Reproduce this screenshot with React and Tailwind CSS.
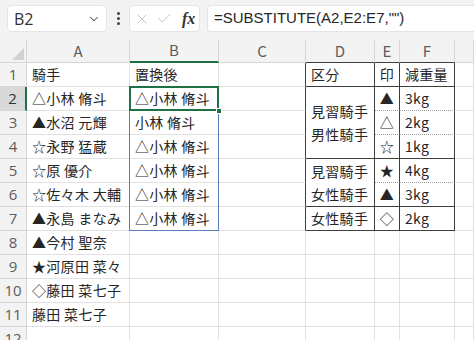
import { ChevronDown, X, Check } from "lucide-react";

const CJK = { fontFamily: '"Noto Sans CJK JP", "Noto Sans", sans-serif' };
const UI = { fontFamily: '"Open Sans", "Liberation Sans", sans-serif' };

const GRID = "border-[#e1e1e1]";

const rows = [
  { a: "騎手", b: "置換後", d: "区分", e: "印", f: "減重量" },
  { a: "△小林 脩斗", b: "△小林 脩斗", d: ["見習騎手", "男性騎手"], span: 3, e: "▲", f: "3kg" },
  { a: "▲水沼 元輝", b: "小林 脩斗", e: "△", f: "2kg" },
  { a: "☆永野 猛蔵", b: "△小林 脩斗", e: "☆", f: "1kg" },
  { a: "☆原 優介", b: "△小林 脩斗", d: ["見習騎手", "女性騎手"], span: 2, e: "★", f: "4kg" },
  { a: "☆佐々木 大輔", b: "△小林 脩斗", e: "▲", f: "3kg" },
  { a: "▲永島 まなみ", b: "△小林 脩斗", d: "女性騎手", e: "◇", f: "2kg" },
  { a: "▲今村 聖奈" },
  { a: "★河原田 菜々" },
  { a: "◇藤田 菜七子" },
  { a: "藤田 菜七子" },
  {},
];

// rows whose bottom edge in E/F is a dotted hairline (inside a merged group)
const dottedRows = [2, 3, 5];

function Cell({ children, className = "" }) {
  return (
    <div className={`h-[24px] flex items-center px-[5px] whitespace-nowrap overflow-hidden text-[14px] tracking-[0.3px] text-[#262626] border-r border-b ${GRID} ${className}`}>
      {children}
    </div>
  );
}

function Toolbar() {
  return (
    <div className="h-[40px] bg-[#f3f3f3] flex items-start pt-[5px]" style={UI}>
      <div className="ml-[7px] w-[100px] h-[27px] bg-white rounded-[4px] border border-[#e4e4e4] flex items-center justify-between pl-[6px] pr-[5px]">
        <span className="text-[16px] text-[#333]">B2</span>
        <ChevronDown size={14} strokeWidth={1.8} className="text-[#555]" />
      </div>
      <div className="w-[22px] h-[27px] flex flex-col items-center justify-center gap-[2px]">
        <span className="w-[3px] h-[3px] rounded-full bg-[#444]" />
        <span className="w-[3px] h-[3px] rounded-full bg-[#444]" />
        <span className="w-[3px] h-[3px] rounded-full bg-[#444]" />
      </div>
      <div className="w-[71px] h-[27px] bg-white rounded-[4px] border border-[#e4e4e4] flex items-center pl-[4px] gap-[6px]">
        <X size={16} strokeWidth={1.2} className="text-[#b5b5b5]" />
        <Check size={17} strokeWidth={1.2} className="text-[#b5b5b5]" />
        <span className="ml-[3px] text-[16px] italic font-semibold text-[#333]" style={{ fontFamily: '"Liberation Serif", serif' }}>
          fx
        </span>
      </div>
      <div className="ml-[7px] flex-1 h-[27px] bg-white rounded-l-[4px] border border-r-0 border-[#e4e4e4] flex items-center pl-[6px]">
        <span className="text-[15px] text-[#262626]" style={{ fontFamily: '"Liberation Sans", sans-serif' }}>
          =SUBSTITUTE(A2,E2:E7,"")
        </span>
      </div>
    </div>
  );
}

function HeaderRow() {
  const head = "h-[23px] flex items-center justify-center text-[15px] text-[#5c5c5c] bg-[#f3f3f3] border-r border-b border-[#d6d6d6]";
  return (
    <>
      <div className={`${head} relative`}>
        <svg width="27" height="23" className="absolute inset-0">
          <polygon points="24,8 24,20 12,20" fill="#d2d2d2" />
        </svg>
      </div>
      <div className={head}>A</div>
      <div className={`${head} bg-[#d9d9d9] text-[#1d6b3f] border-b-2 border-b-[#1e7145]`}>B</div>
      <div className={head}>C</div>
      <div className={`${head} border-b-[#3d3d3d]`}>D</div>
      <div className={`${head} border-b-[#3d3d3d]`}>E</div>
      <div className={`${head} border-b-[#3d3d3d]`}>F</div>
      <div className={head}></div>
    </>
  );
}

export default function App() {
  return (
    <div className="w-[474px] h-[340px] overflow-hidden bg-white" style={CJK}>
      <Toolbar />
      <div className="grid grid-cols-[27px_103px_89px_87px_69px_25px_55px_1fr] grid-rows-[23px_repeat(12,24px)]">
        <HeaderRow />
        {rows.map((r, i) => {
          const n = i + 1;
          const inTable = n <= 7;
          const selected = n === 2;
          const eBottom = dottedRows.includes(n)
            ? "border-b-[#a0a0a0] [border-bottom-style:dotted]!"
            : "border-b-[#3d3d3d]";
          return (
            <div key={n} className="contents">
              <div
                className={`h-[24px] flex items-center justify-center text-[15px] border-b border-[#d6d6d6] ${
                  selected
                    ? "bg-[#d9d9d9] text-[#333] border-r-2 border-r-[#1e7145]"
                    : "bg-[#f3f3f3] text-[#5c5c5c] border-r"
                }`}
                style={UI}
              >
                {n}
              </div>
              <Cell>{r.a}</Cell>
              {selected ? (
                <div className={`relative h-[24px] flex items-center px-[5px] whitespace-nowrap text-[14px] tracking-[0.3px] text-[#262626] border-r border-b ${GRID}`}>
                  {r.b}
                  <div className="absolute z-10 -left-px -top-px w-[90px] h-[145px] border border-[#5b7cbf] pointer-events-none" />
                  <div className="absolute z-20 -left-px -top-px w-[90px] h-[25px] border-2 border-[#1e7145] pointer-events-none" />
                  <div className="absolute z-30 right-[-4px] bottom-[-4px] w-[6px] h-[6px] bg-[#1e7145] border border-white" />
                </div>
              ) : (
                <Cell>{r.b}</Cell>
              )}
              <Cell className={inTable ? "border-r-[#3d3d3d]" : ""} />
              {r.d !== undefined &&
                (Array.isArray(r.d) ? (
                  <div
                    className={`flex flex-col justify-center px-[5px] whitespace-nowrap text-[14px] tracking-[0.3px] leading-[23px] text-[#262626] border-r border-b border-[#3d3d3d] ${
                      r.span === 3 ? "row-span-3" : "row-span-2"
                    }`}
                  >
                    {r.d.map((t) => (
                      <span key={t}>{t}</span>
                    ))}
                  </div>
                ) : (
                  <Cell className="border-r-[#3d3d3d] border-b-[#3d3d3d]">{r.d}</Cell>
                ))}
              {!inTable && <Cell />}
              {inTable ? (
                <>
                  <Cell className={`justify-center px-0 border-r-[#3d3d3d] ${eBottom}`}>{r.e}</Cell>
                  <Cell className={`border-r-[#3d3d3d] ${eBottom}`}>{r.f}</Cell>
                </>
              ) : (
                <>
                  <Cell />
                  <Cell />
                </>
              )}
              <Cell />
            </div>
          );
        })}
      </div>
    </div>
  );
}
